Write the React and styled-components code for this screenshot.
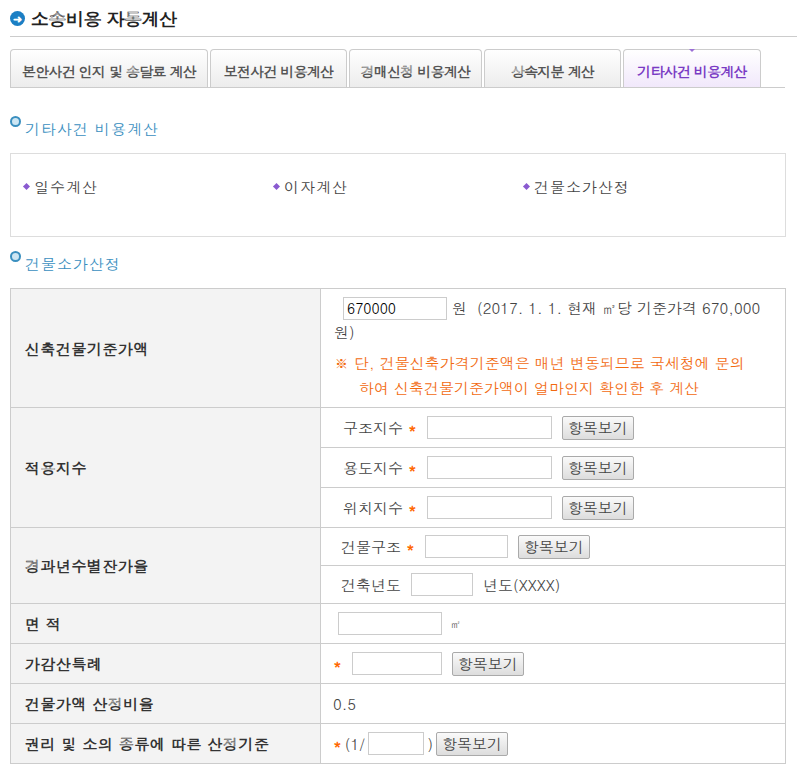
import React from "react";
import styled, { createGlobalStyle } from "styled-components";

const G = createGlobalStyle`
  body { margin:0; background:#fff; font-family: Dotum, "Noto Sans CJK KR", "Noto Sans", sans-serif; color:#333; }
`;
const Page = styled.div` width:797px; padding:0 0 10px 0; box-sizing:border-box; `;
const TitleBar = styled.div`
  display:flex; align-items:center; gap:6px; height:36px; margin-left:10px;
  border-bottom:1px solid #ccc; font-size:18px; font-weight:bold; color:#222; letter-spacing:-0.5px;
`;
const Circle = styled.span`
  width:15px; height:15px; border-radius:50%; background:#1b7fc4; color:#fff; font-size:11px;
  display:inline-flex; align-items:center; justify-content:center; line-height:1;
`;
const Tabs = styled.div`
  display:flex; gap:2px; margin:12px 12px 0 10px; border-bottom:1px solid #ccc; height:38px;
`;
const Tab = styled.div`
  position:relative; width:${p=>p.w}px; box-sizing:border-box; height:38px;
  border:1px solid #ccc; border-bottom:none; border-radius:4px 4px 0 0;
  background:${p=>p.active?"linear-gradient(#fff,#f1e8fb)":"linear-gradient(#fff,#ececec)"};
  color:${p=>p.active?"#7a3bc4":"#555"}; font-size:14px; font-weight:bold; letter-spacing:-0.8px;
  display:flex; align-items:center; justify-content:center; padding-top:4px;
  ${p=>p.active && `&:after{content:"";position:absolute;top:-1px;left:50%;margin-left:-3px;border:3px solid transparent;border-top-color:#9b6fd6;}`}
`;
const Heading = styled.div`
  display:flex; align-items:flex-start; gap:4px; margin:${p=>p.m}; margin-left:10px;
  font-size:15px; color:#3a8fbf; letter-spacing:1px;
`;
const Dot = styled.span`
  width:7px; height:7px; border-radius:50%; border:2px solid #3a8fbf; background:#cde6f3; margin-top:-2px;
`;
const Box = styled.div`
  margin:14px 11px 0 10px; height:84px; box-sizing:border-box; border:1px solid #ddd;
  display:grid; grid-template-columns:250px 250px 1fr; align-items:start; padding:22px 0 0 13px;
  font-size:15px; letter-spacing:1px; color:#444;
`;
const Item = styled.div` display:flex; align-items:center; gap:5px; `;
const Diamond = styled.span` width:5px; height:5px; background:#8a5ad0; transform:rotate(45deg); `;
const Table = styled.table`
  margin:14px 0 0 10px; width:776px; border-collapse:collapse; table-layout:fixed; font-size:15px;
  td { border:1px solid #ccc; }
`;
const Th = styled.td`
  background:#f3f3f3; font-weight:bold; padding-left:14px; color:#333; letter-spacing:0.5px;
`;
const Td = styled.td`
  height:${p=>p.h}px; padding:0 8px 0 ${p=>p.pl||12}px; color:#444; box-sizing:border-box;
`;
const Line = styled.div` display:flex; align-items:center; gap:${p=>p.g||10}px; `;
const Input = styled.input`
  width:${p=>p.w}px; height:23px; box-sizing:border-box; border:1px solid #ccc; font-size:14px; padding:0 3px; font-family:inherit;
`;
const Btn = styled.button`
  height:24px; padding:0 5px; border:1px solid #aaa; border-radius:2px; background:linear-gradient(#fafafa,#ddd);
  font-size:15px; color:#444; font-family:inherit;
`;
const Star = styled.span` color:#f60; font-weight:bold; `;
const Note = styled.div` color:#f26a10; font-size:15px; line-height:25px; margin-top:6px; `;

const sub = (label, w) => (
  <Line><span>{label} <Star>*</Star></span><Input w={w||125}/><Btn>항목보기</Btn></Line>
);

export default function App(){
  return <Page><G/>
    <TitleBar><Circle>➜</Circle>소송비용 자동계산</TitleBar>
    <Tabs>
      <Tab w={198}>본안사건 인지 및 송달료 계산</Tab>
      <Tab w={137}>보전사건 비용계산</Tab>
      <Tab w={133}>경매신청 비용계산</Tab>
      <Tab w={137}>상속지분 계산</Tab>
      <Tab w={138} active>기타사건 비용계산</Tab>
    </Tabs>
    <Heading m="30px 0 0"><Dot/>기타사건 비용계산</Heading>
    <Box>
      <Item><Diamond/>일수계산</Item><Item><Diamond/>이자계산</Item><Item><Diamond/>건물소가산정</Item>
    </Box>
    <Heading m="16px 0 0"><Dot/>건물소가산정</Heading>
    <Table><colgroup><col style={{width:310}}/><col/></colgroup><tbody>
      <tr><Th>신축건물기준가액</Th>
        <Td h={119} pl={13}>
          <div style={{lineHeight:"24px"}}><Input w={104} defaultValue="670000" style={{marginLeft:9}}/> 원 &nbsp;(2017. 1. 1. 현재 ㎡당 기준가격 670,000원)</div>
          <Note>※ 단, 건물신축가격기준액은 매년 변동되므로 국세청에 문의<br/>&nbsp;&nbsp;&nbsp;&nbsp;&nbsp;하여 신축건물기준가액이 얼마인지 확인한 후 계산</Note>
        </Td></tr>
      <tr><Th rowSpan={3}>적용지수</Th><Td h={40} pl={22}>{sub("구조지수")}</Td></tr>
      <tr><Td h={40} pl={22}>{sub("용도지수")}</Td></tr>
      <tr><Td h={40} pl={22}>{sub("위치지수")}</Td></tr>
      <tr><Th rowSpan={2}>경과년수별잔가율</Th><Td h={38} pl={20}>{sub("건물구조",83)}</Td></tr>
      <tr><Td h={38} pl={20}><Line><span>건축년도</span><Input w={62}/><span>년도(XXXX)</span></Line></Td></tr>
      <tr><Th>면 적</Th><Td h={40} pl={17}><Line g={8}><Input w={104}/><span style={{fontSize:11}}>㎡</span></Line></Td></tr>
      <tr><Th>가감산특례</Th><Td h={40} pl={12}><Line><Star>*</Star><Input w={90}/><Btn>항목보기</Btn></Line></Td></tr>
      <tr><Th>건물가액 산정비율</Th><Td h={40} pl={12}>0.5</Td></tr>
      <tr><Th>권리 및 소의 종류에 따른 산정기준</Th><Td h={40} pl={12}><Line g={3}><Star>*</Star>(1/<Input w={56}/>)<Btn>항목보기</Btn></Line></Td></tr>
    </tbody></Table>
  </Page>;
}
